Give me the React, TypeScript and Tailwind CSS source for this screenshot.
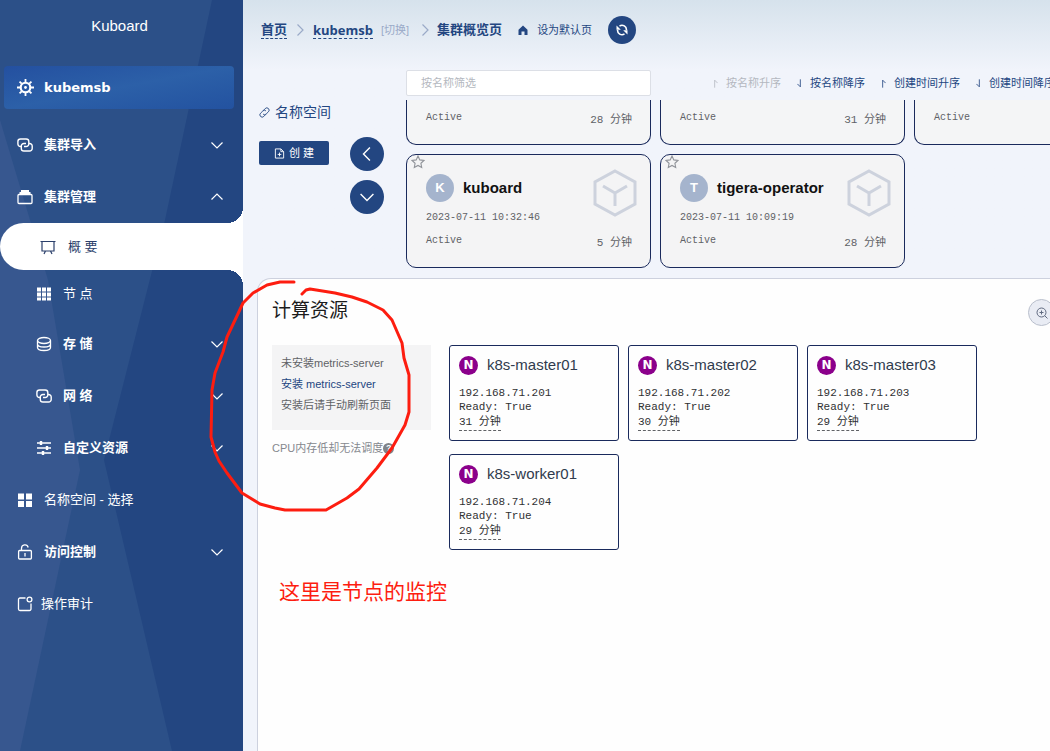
import React from "react";
import clsx from "clsx";

type IconProps = { className?: string };

const HelmIcon = ({ className }: IconProps) => (
  <svg viewBox="0 0 16 16" className={className} fill="none" stroke="currentColor">
    <circle cx="8" cy="8" r="4.5" strokeWidth="2" />
    <circle cx="8" cy="8" r="1.3" fill="currentColor" stroke="none" />
    <path
      d="M8 0v3M8 13v3M0 8h3M13 8h3M2.4 2.4l2 2M11.6 11.6l2 2M13.6 2.4l-2 2M2.4 13.6l2-2"
      strokeWidth="1.7"
    />
  </svg>
);

const LinkedIcon = ({ className }: IconProps) => (
  <svg viewBox="0 0 16 16" className={className} fill="none" stroke="currentColor" strokeWidth="1.4">
    <path d="M4.200 9.500H3.500A2.600 2.600 0 0 1 .9 6.900V4.600A2.600 2.600 0 0 1 3.500 2h5.700a2.600 2.600 0 0 1 2.600 2.600v2.300a2.600 2.600 0 0 1-2.600 2.600H7" />
    <path d="M12 6.500h.6a2.600 2.600 0 0 1 2.600 2.600v2.300a2.600 2.600 0 0 1-2.600 2.600H6.900a2.600 2.600 0 0 1-2.600-2.600V9.100a2.600 2.600 0 0 1 2.600-2.600H9" />
  </svg>
);

const BoxIcon = ({ className }: IconProps) => (
  <svg viewBox="0 0 16 16" className={className} fill="none" stroke="currentColor" strokeWidth="1.3">
    <rect x="1" y="5.5" width="14" height="9" rx="1" />
    <path d="M2.5 4h11" strokeWidth="2" />
    <path d="M4 2h8" strokeWidth="2" />
  </svg>
);

const BoardIcon = ({ className }: IconProps) => (
  <svg viewBox="0 0 16 16" className={className} fill="none" stroke="currentColor" strokeWidth="1.2">
    <path d="M.5 2.500h15M2 2.500v9.500h12V2.500M5.500 12L4 15M10.500 12L12 15" />
  </svg>
);

const GridIcon = ({ className }: IconProps) => (
  <svg viewBox="0 0 16 16" className={className} fill="currentColor">
    <path d="M1 1.500h4v4H1zM6 1.500h4v4H6zM11 1.500h4v4h-4zM1 6.500h4v4H1zM6 6.500h4v4H6zM11 6.500h4v4h-4zM1 11.500h4v3H1zM6 11.500h4v3H6zM11 11.500h4v3h-4z" />
  </svg>
);

const CoinIcon = ({ className }: IconProps) => (
  <svg viewBox="0 0 16 16" className={className} fill="none" stroke="currentColor" strokeWidth="1.3">
    <ellipse cx="8" cy="4.5" rx="6.5" ry="3" />
    <path d="M1.500 4.500v7c0 1.700 2.900 3 6.500 3s6.500-1.300 6.500-3v-7M1.500 8c0 1.700 2.900 3 6.500 3s6.500-1.300 6.500-3" />
  </svg>
);

const SlidersIcon = ({ className }: IconProps) => (
  <svg viewBox="0 0 16 16" className={className} fill="none" stroke="currentColor" strokeWidth="1.4">
    <path d="M1 3h14M1 8h14M1 13h14" />
    <path d="M5 1v4M11 6v4M7 11v4" strokeWidth="2.4" />
  </svg>
);

const TilesIcon = ({ className }: IconProps) => (
  <svg viewBox="0 0 16 16" className={className} fill="currentColor">
    <path d="M1 1.500h6v6H1zM9 1.500h6v6H9zM1 9h6v6H1zM9 9h6v6H9z" />
  </svg>
);

const UnlockIcon = ({ className }: IconProps) => (
  <svg viewBox="0 0 16 16" className={className} fill="none" stroke="currentColor" strokeWidth="1.3">
    <rect x="1.6" y="6.5" width="12.8" height="8.500" rx="1" />
    <path d="M4.500 6.500V4.300a3.400 3.400 0 0 1 6.700-.8M8 9v3.500" />
  </svg>
);

const AuditIcon = ({ className }: IconProps) => (
  <svg viewBox="0 0 16 16" className={className} fill="none" stroke="currentColor" strokeWidth="1.3">
    <path d="M8.500 2H3a1.500 1.500 0 0 0-1.500 1.500V13A1.500 1.500 0 0 0 3 14.500h9.500A1.500 1.500 0 0 0 14 13V7.500" />
    <circle cx="12.500" cy="3.500" r="2.400" />
  </svg>
);

const Chevron = ({ className }: IconProps) => (
  <svg viewBox="0 0 12 12" className={className} fill="none" stroke="currentColor" strokeWidth="1.2">
    <path d="M.5 3.500L6 9l5.500-5.500" />
  </svg>
);

const RefreshIcon = ({ className }: IconProps) => (
  <svg viewBox="0 0 12 12" className={className} fill="none" stroke="currentColor" strokeWidth="1.6">
    <path d="M3.500 2.100A4.400 4.400 0 0 1 10.400 6.200M8.500 9.900A4.400 4.400 0 0 1 1.600 5.800" />
    <path d="M.5 1.500v4.300h4.300zM11.500 10.500V6.200H7.200z" fill="currentColor" stroke="none" />
  </svg>
);

const LinkIcon = ({ className }: IconProps) => (
  <svg viewBox="0 0 12 12" className={className} fill="none" stroke="currentColor" strokeWidth="1">
    <path d="M5 3.500l1.800-1.800a2.400 2.400 0 0 1 3.500 3.500L7.800 7.700a2.400 2.400 0 0 1-3.300.1M7 8.500l-1.800 1.800a2.400 2.400 0 0 1-3.500-3.500l2.500-2.500a2.400 2.400 0 0 1 3.300-.1" />
  </svg>
);

const DocAddIcon = ({ className }: IconProps) => (
  <svg viewBox="0 0 12 12" className={className} fill="none" stroke="currentColor" strokeWidth="1">
    <path d="M7.500 1H1.500v10h9V4zM7.500 1v3h3M6 5v4M4 7h4" />
  </svg>
);

const StarIcon = ({ className }: IconProps) => (
  <svg viewBox="0 0 14 14" className={className} fill="none" stroke="currentColor" strokeWidth="1.1">
    <path d="M7 1l1.800 3.900 4.200.5-3.100 2.900.8 4.200L7 10.400l-3.700 2.100.8-4.200L1 5.400l4.200-.5z" />
  </svg>
);

const CubeIcon = ({ className }: IconProps) => (
  <svg viewBox="0 0 44 48" className={className} fill="none" stroke="currentColor" strokeWidth="3">
    <path d="M22 2l20 11v22L22 46 2 35V13z" />
    <path d="M10 17l12 7 12-7M22 24v13" />
  </svg>
);

const HomeIcon = ({ className }: IconProps) => (
  <svg viewBox="0 0 12 12" className={className} fill="currentColor">
    <path d="M6 1.500L1.500 5.800V11h3V7.500h3V11h3V5.800z" />
  </svg>
);

const ZoomIcon = ({ className }: IconProps) => (
  <svg viewBox="0 0 12 12" className={className} fill="none" stroke="currentColor" strokeWidth="1">
    <circle cx="5.500" cy="5.500" r="4.500" />
    <path d="M8.700 8.700L11.500 11.500M5.500 3.500v4M3.500 5.500h4" />
  </svg>
);

const SortIcon = ({ className }: IconProps) => (
  <svg viewBox="0 0 6 10" className={className} fill="none" stroke="currentColor" strokeWidth="1">
    <path d="M2 10V1l3.500 3.500" />
  </svg>
);

const menu = [
  { name: "集群导入", icon: LinkedIcon, bold: true, arrow: "down" },
  { name: "集群管理", icon: BoxIcon, bold: true, arrow: "up" },
  { name: "概 要", icon: BoardIcon, active: true },
  { name: "节 点", icon: GridIcon, sub: true, short: true },
  { name: "存 储", icon: CoinIcon, sub: true, bold: true, arrow: "down" },
  { name: "网 络", icon: LinkedIcon, sub: true, bold: true, arrow: "down" },
  { name: "自定义资源", icon: SlidersIcon, sub: true, bold: true, arrow: "down" },
  { name: "名称空间 - 选择", icon: TilesIcon },
  { name: "访问控制", icon: UnlockIcon, bold: true, arrow: "down" },
  { name: "操作审计", icon: AuditIcon, tight: true },
];

const sorts = [
  { name: "按名称升序", disabled: true },
  { name: "按名称降序", desc: true },
  { name: "创建时间升序" },
  { name: "创建时间降序", desc: true },
];

const clippedCards = [
  { status: "Active", age: "28 分钟" },
  { status: "Active", age: "31 分钟" },
  { status: "Active", age: "" },
];

const namespaces = [
  { name: "kuboard", created: "2023-07-11 10:32:46", status: "Active", age: "5 分钟" },
  { name: "tigera-operator", created: "2023-07-11 10:09:19", status: "Active", age: "28 分钟" },
];

const nodes = [
  { name: "k8s-master01", ip: "192.168.71.201", age: "31 分钟" },
  { name: "k8s-master02", ip: "192.168.71.202", age: "30 分钟" },
  { name: "k8s-master03", ip: "192.168.71.203", age: "29 分钟" },
  { name: "k8s-worker01", ip: "192.168.71.204", age: "29 分钟" },
];

const Sidebar = () => (
  <aside className="relative isolate w-[243px] shrink-0 bg-[#234681] text-white">
    {/* background facets */}
    <svg
      className="absolute inset-0 -z-10 h-full w-full"
      viewBox="0 0 243 751"
      preserveAspectRatio="none"
    >
      <path d="M0 0H212L165 220L104 460L172 751H0z" fill="#2c5088" />
      <path d="M0 120L48 280L80 470L20 751H0z" fill="#37578f" />
    </svg>

    <h1 className="h-[66px] pt-[14px] pr-1 text-center text-[15px] leading-6">Kuboard</h1>

    <a
      href="#cluster"
      className="mr-[9px] mb-[10px] ml-1 flex h-[43px] items-center gap-[10px] rounded bg-linear-to-br from-[#2450a0] via-[#2c60a8] to-[#2352a0] pl-[13px]"
    >
      <HelmIcon className="h-[17px] w-[17px]" />
      <span className="font-['DejaVu_Sans'] text-[13px] font-bold">kubemsb</span>
    </a>

    <nav>
      <ul>
        {menu.map((item) => (
          <li
            key={item.name}
            className={clsx(
              "relative",
              item.active ? "h-[47px]" : item.short ? "h-12" : "h-[52px]",
            )}
          >
            {/* inverted corners next to the active row */}
            {item.active && (
              <>
                <span className="absolute -top-4 right-0 h-4 w-4 bg-[radial-gradient(circle_at_0_0,transparent_16px,white_16px)]" />
                <span className="absolute right-0 -bottom-4 h-4 w-4 bg-[radial-gradient(circle_at_0_100%,transparent_16px,white_16px)]" />
              </>
            )}
            <a
              href="#menu"
              className={clsx(
                "flex h-full items-center pr-5 text-[13px]",
                item.active && "rounded-l-full bg-white pl-10 text-[#2b3f6b]",
                item.sub && "pl-9",
                !item.active && !item.sub && "pl-[17px]",
                item.bold && "font-bold",
              )}
            >
              <item.icon className="h-4 w-4" />
              <span
                className={clsx("flex-1", item.tight ? "ml-2" : item.active ? "ml-3" : "ml-[11px]")}
              >
                {item.name}
              </span>
              {item.arrow && (
                <Chevron className={clsx("h-3 w-3", item.arrow === "up" && "rotate-180")} />
              )}
            </a>
          </li>
        ))}
      </ul>
    </nav>
  </aside>
);

const Breadcrumb = () => (
  <nav className="flex h-[60px] shrink-0 items-center pl-[18px] text-[13px] whitespace-nowrap text-[#234681]">
    <a href="#home" className="border-b border-dashed border-[#234681] leading-4 font-bold">
      首页
    </a>
    <Chevron className="mx-[7px] h-3 w-3 -rotate-90 text-[#9aaac8]" />
    <a
      href="#cluster"
      className="border-b border-dashed border-[#234681] font-['Open_Sans'] leading-4 font-bold"
    >
      kubemsb
    </a>
    <a href="#switch" className="ml-2 text-[11px] text-[#9aaac8]">
      [切换]
    </a>
    <Chevron className="mr-[6px] ml-[10px] h-3 w-3 -rotate-90 text-[#9aaac8]" />
    <span className="font-bold">集群概览页</span>
    <button className="ml-[15px] flex items-center gap-2 text-[11px]">
      <HomeIcon className="h-3 w-3" />
      设为默认页
    </button>
    <button
      aria-label="刷新"
      className="ml-4 flex h-7 w-7 items-center justify-center rounded-full bg-[#234681] text-white"
    >
      <RefreshIcon className="h-3 w-3" />
    </button>
  </nav>
);

const StatusRow = ({ status, age }: { status: string; age: string }) => (
  <div className="flex justify-between font-['Liberation_Mono','Noto_Sans_CJK_SC',monospace] text-[#606266]">
    <span className="text-[10px] leading-4">{status}</span>
    <span className="text-[11px] leading-5">{age}</span>
  </div>
);

const NamespaceCards = () => (
  <div className="mt-1 grid grid-cols-[repeat(3,245px)] gap-[9px]">
    {clippedCards.map((card, index) => (
      <div
        key={`${index}`}
        className="h-[45px] rounded-b-[10px] border border-t-0 border-[#1a2a5c] bg-[#f4f5f6] pt-[10px] pr-[18px] pl-[19px]"
      >
        <StatusRow status={card.status} age={card.age} />
      </div>
    ))}
    {namespaces.map((item) => (
      <div
        key={item.name}
        className="relative h-[114px] rounded-[10px] border border-[#1a2a5c] bg-[#f4f4f5] pt-[19px] pr-[18px] pl-[19px]"
      >
        <StarIcon className="absolute top-0 left-1 h-[14px] w-[14px] text-[#909399]" />
        <CubeIcon className="absolute top-[14px] right-[13px] h-12 w-11 text-[#cdd2dd]" />
        <div className="flex items-center gap-[9px]">
          <span className="flex h-7 w-7 items-center justify-center rounded-full bg-[#a5b4cd] text-[13px] font-bold text-white">
            {item.name[0].toUpperCase()}
          </span>
          <h3 className="text-[15px] font-bold text-[#111]">{item.name}</h3>
        </div>
        <p className="mt-2 mb-[7px] font-['Liberation_Mono',monospace] text-[10px] leading-4 text-[#606266]">
          {item.created}
        </p>
        <StatusRow status={item.status} age={item.age} />
      </div>
    ))}
  </div>
);

const NamespaceSection = () => (
  <section className="flex shrink-0 pl-4">
    <div className="w-[91px] shrink-0 pt-[41px]">
      <a
        href="#namespace"
        className="flex items-center gap-[5px] text-[14px] leading-[22px] whitespace-nowrap text-[#234681]"
      >
        <LinkIcon className="h-[11px] w-[11px]" />
        名称空间
      </a>
      <button className="mt-[18px] flex h-6 w-[70px] items-center justify-center gap-1 rounded-xs bg-[#234681] text-[11px] text-white">
        <DocAddIcon className="h-[11px] w-[11px]" />
        创 建
      </button>
    </div>

    <div className="mr-[22px] flex shrink-0 flex-col gap-[9px] pt-[77px] text-white">
      <button
        aria-label="收起"
        className="flex h-[34px] w-[34px] items-center justify-center rounded-full bg-[#234681]"
      >
        <Chevron className="h-[14px] w-[14px] rotate-90" />
      </button>
      <button
        aria-label="展开"
        className="flex h-[34px] w-[34px] items-center justify-center rounded-full bg-[#234681]"
      >
        <Chevron className="h-[14px] w-[14px]" />
      </button>
    </div>

    <div className="min-w-0 flex-1 pt-[10px]">
      <div className="flex items-center text-[11px]">
        <input
          type="text"
          aria-label="按名称筛选"
          placeholder="按名称筛选"
          className="h-[26px] w-[245px] shrink-0 rounded-xs border border-[#dcdfe6] bg-white px-[14px] placeholder:text-[#b4b8c0]"
        />
        <div className="ml-[62px] flex gap-4 whitespace-nowrap">
          {sorts.map((sort) => (
            <button
              key={sort.name}
              disabled={sort.disabled}
              className={clsx(
                "flex shrink-0 items-center gap-2",
                sort.disabled ? "text-[#b4b8c0]" : "text-[#234681]",
              )}
            >
              <SortIcon className={clsx("h-[9px] w-[5px]", sort.desc && "-scale-100")} />
              {sort.name}
            </button>
          ))}
        </div>
      </div>
      <NamespaceCards />
    </div>
  </section>
);

const ResourcePanel = () => (
  <section className="mt-[10px] ml-[14px] flex-1 rounded-tl-[14px] border-t border-l border-[#cdd1de] bg-[#fefefe] pl-[14px]">
    <div className="flex items-start justify-between pt-[18px]">
      <h2 className="text-[19px] leading-7 text-[#1c1c1c]">计算资源</h2>
      <button
        aria-label="放大"
        className="mt-[2px] -mr-[5px] flex h-[27px] w-[27px] items-center justify-center rounded-full border border-[#b9bfcc] bg-[#e9ecf4] text-[#606a80]"
      >
        <ZoomIcon className="h-3 w-3" />
      </button>
    </div>

    <div className="mt-[19px] flex">
      <div className="w-[177px] shrink-0 text-[11px]">
        <div className="h-[85px] w-[159px] bg-[#f4f4f5] px-[9px] pt-2 leading-[21px] text-[#606266]">
          <p>未安装metrics-server</p>
          <a href="#install" className="block text-[#234681]">
            安装 metrics-server
          </a>
          <p>安装后请手动刷新页面</p>
        </div>
        <p className="mt-[10px] flex items-center leading-4 whitespace-nowrap text-[#85888e]">
          CPU内存低却无法调度
          <span className="flex h-[11px] w-[11px] items-center justify-center rounded-full bg-[#808388] text-[9px] font-bold text-white">
            ?
          </span>
        </p>
      </div>

      <div className="grid flex-1 grid-cols-[repeat(auto-fill,170px)] gap-x-[9px] gap-y-[13px]">
        {nodes.map((node) => (
          <div
            key={node.name}
            className="h-[96px] rounded-[3px] border border-[#1a2a5c] pt-[9px] pl-[9px]"
          >
            <div className="flex items-center gap-[9px]">
              <span className="flex h-[19px] w-[19px] items-center justify-center rounded-full bg-[#8b008b] font-['DejaVu_Sans'] text-[12px] font-bold text-white">
                N
              </span>
              <h3 className="text-[15px] leading-5 text-[#303b4d]">{node.name}</h3>
            </div>
            <div className="mt-[11px] font-['Liberation_Mono','Noto_Sans_CJK_SC',monospace] text-[11px] leading-[14px] text-[#303133]">
              <p>{node.ip}</p>
              <p>Ready: True</p>
              <span className="inline-block border-b border-dashed border-[#606266] leading-4">
                {node.age}
              </span>
            </div>
          </div>
        ))}
      </div>
    </div>

    <p className="mt-[26px] ml-[7px] text-[21px] leading-8 text-[#fd1d10]">这里是节点的监控</p>
  </section>
);

const App = () => (
  <div className="relative flex min-h-screen overflow-hidden font-['Liberation_Sans','Noto_Sans_CJK_SC',sans-serif]">
    <Sidebar />
    <main className="flex min-w-0 flex-1 flex-col overflow-hidden bg-[#f1f4fb] bg-linear-to-b from-[#d6e2ec] to-[#f1f4fb] to-[70px]">
      <Breadcrumb />
      <NamespaceSection />
      <ResourcePanel />
    </main>

    {/* hand-drawn marker around the metrics notice */}
    <svg
      className="pointer-events-none absolute top-[275px] left-[205px] h-[245px] w-[215px]"
      viewBox="205 275 215 245"
      fill="none"
      stroke="#fd1d10"
      strokeWidth="3"
      strokeLinecap="round"
      strokeLinejoin="round"
    >
      <path d="M294 282H280L267 285L253 293L243 303L236 318L227 337L223 352L215 373L212 390L211 437L215 452L219 461L227 473L242 493L260 504L275 508L285 510H326L347 498L359 489L377 468L392 448L405 425L409 412V375L404 358L402 343L392 320L383 310L367 302L352 297L335 293L310 289L306 290L302 294" />
    </svg>
  </div>
);

export default App;
